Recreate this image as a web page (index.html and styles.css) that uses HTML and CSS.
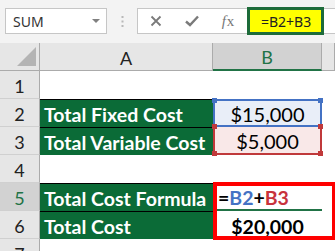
FILE: index.html
```html
<!DOCTYPE html>
<html lang="en">
<head>
    <meta charset="UTF-8">
    <title>Total Cost Formula</title>
    <link rel="stylesheet" href="styles.css">
</head>
<body>

<div class="toolbar">
    <div class="namebox"><span>SUM</span><span class="caret"></span></div>
    <div class="grip">
        <svg width="3" height="11" viewBox="0 0 3 11"><rect x="0.5" y="0" width="2" height="2" fill="#b8b8b8"/><rect x="0.5" y="4.5" width="2" height="2" fill="#b8b8b8"/><rect x="0.5" y="9" width="2" height="2" fill="#b8b8b8"/></svg>
    </div>
    <div class="fbar">
        <span class="icon">
            <svg width="12" height="12" viewBox="0 0 12 12"><path d="M1.5 1.5 L10.5 10.5 M10.5 1.5 L1.5 10.5" stroke="#7a7a7a" stroke-width="1.8" fill="none"/></svg>
        </span>
        <span class="icon">
            <svg width="14" height="12" viewBox="0 0 14 12"><path d="M1 6.5 L5 10 L13 1.5" stroke="#7a7a7a" stroke-width="2.4" fill="none"/></svg>
        </span>
        <span class="icon fx"><i>f</i><span>x</span></span>
        <div class="formula">=B2+B3</div>
    </div>
</div>

<div class="sheet">
    <div class="corner"><span class="tri"></span></div>
    <div class="colhead">A</div>
    <div class="colhead sel">B</div>
    <div class="colhead"></div>

    <div class="rowhead">1</div>
    <div class="cell"></div><div class="cell"></div><div class="cell"></div>

    <div class="rowhead">2</div>
    <div class="cell label">Total Fixed Cost</div>
    <div class="cell value ref blue">$15,000
        <span class="h tl"></span><span class="h tr"></span>
    </div>
    <div class="cell"></div>

    <div class="rowhead">3</div>
    <div class="cell label">Total Variable Cost</div>
    <div class="cell value ref red">$5,000
        <span class="h tl"></span><span class="h tr"></span><span class="h bl"></span><span class="h br"></span>
    </div>
    <div class="cell"></div>

    <div class="rowhead">4</div>
    <div class="cell"></div><div class="cell"></div><div class="cell"></div>

    <div class="rowhead sel">5</div>
    <div class="cell label">Total Cost Formula</div>
    <div class="cell formula-cell">=<span class="b2">B2</span>+<span class="b3">B3</span></div>
    <div class="cell"></div>

    <div class="rowhead">6</div>
    <div class="cell label">Total Cost</div>
    <div class="cell value total">$20,000</div>
    <div class="cell"></div>

    <div class="rowhead">7</div>
    <div class="cell"></div><div class="cell"></div><div class="cell"></div>

    <div class="highlight"></div>
</div>

</body>
</html>
```

FILE: styles.css
```css
body {
    margin: 0;
    font-family: Lato, "Liberation Sans", sans-serif;
    background-color: #fff;
    overflow: hidden;
}
.toolbar {
    height: 43px;
    box-sizing: border-box;
    padding-top: 8px;
    display: flex;
    align-items: flex-start;
    background-color: #f3f3f3;
}
.namebox {
    margin-left: 5px;
    width: 102px;
    height: 26px;
    box-sizing: border-box;
    padding: 0 6px 0 7px;
    display: flex;
    align-items: center;
    justify-content: space-between;
    background-color: #fff;
    border: 1px solid #c6c6c6;
    font-family: "Noto Sans", sans-serif;
    font-size: 14px;
    color: #333;
}
.caret {
    border-left: 4px solid transparent;
    border-right: 4px solid transparent;
    border-top: 4px solid #808080;
}
.grip {
    width: 30px;
    height: 26px;
    display: flex;
    align-items: center;
    justify-content: center;
}
.fbar {
    flex: 1;
    height: 26px;
    box-sizing: border-box;
    display: flex;
    align-items: center;
    background-color: #fff;
    border: 1px solid #c6c6c6;
    border-right: none;
}
.icon {
    width: 36px;
    display: flex;
    align-items: center;
    justify-content: center;
}
.fx {
    font-family: "Liberation Serif", serif;
    font-size: 15px;
    color: #777;
}
.fx i {
    margin-right: 1px;
}
.formula {
    margin-left: 1px;
    width: 77px;
    height: 28px;
    box-sizing: border-box;
    padding-left: 11px;
    display: flex;
    align-items: center;
    background-color: #ffff00;
    border: 3px solid #1d6b3a;
    font-family: "Noto Sans", sans-serif;
    font-size: 14px;
    color: #222;
}
.sheet {
    position: relative;
    display: grid;
    grid-template-columns: 40px 173px 109px 1fr;
    grid-auto-rows: 28px;
}
.corner, .colhead, .rowhead {
    box-sizing: border-box;
    background-color: #e6e6e6;
    display: flex;
    align-items: center;
    justify-content: center;
    color: #222;
}
.corner {
    border-right: 1px solid #ababab;
    border-bottom: 1px solid #ababab;
    justify-content: flex-end;
    align-items: flex-end;
    padding: 0 3px 4px 0;
}
.tri {
    width: 0;
    height: 0;
    border-left: 19px solid transparent;
    border-bottom: 19px solid #b4b4b4;
}
.colhead {
    border-right: 1px solid #ababab;
    border-bottom: 1px solid #ababab;
    font-size: 18px;
    padding-top: 2px;
}
.colhead.sel {
    background-color: #d2d2d2;
    color: #217346;
    border-bottom: 2px solid #217346;
}
.rowhead {
    border-right: 1px solid #ababab;
    border-bottom: 1px solid #d0d0d0;
    font-size: 18px;
    padding-top: 2px;
}
.rowhead.sel {
    background-color: #d2d2d2;
    color: #217346;
}
.cell {
    position: relative;
    box-sizing: border-box;
    display: flex;
    align-items: center;
    font-size: 20px;
    color: #000;
}
.label {
    padding: 2px 0 0 4px;
    background-color: #0b6b37;
    border-top: 1px solid #000;
    color: #fff;
    font-size: 19.5px;
    font-weight: bold;
}
.value {
    justify-content: center;
    padding-top: 2px;
}
.ref {
    border: 2px solid;
}
.ref.blue {
    background-color: #e9eef8;
    border-color: #4472c4;
}
.ref.red {
    background-color: #f9e8e8;
    border-color: #c0393b;
    border-top: none;
}
.h {
    position: absolute;
    width: 5px;
    height: 5px;
}
.blue .h { background-color: #4472c4; }
.red .h { background-color: #c0393b; }
.h.tl { top: -3px; left: -3px; }
.h.tr { top: -3px; right: -3px; }
.h.bl { bottom: -3px; left: -3px; }
.h.br { bottom: -3px; right: -3px; }
.formula-cell {
    padding: 2px 0 0 5px;
    font-size: 19.5px;
    font-weight: bold;
    border-bottom: 2px solid #217346;
}
.b2 { color: #4472c4; }
.b3 { color: #c8323c; }
.total {
    font-size: 19.5px;
    font-weight: bold;
}
.highlight {
    position: absolute;
    grid-column: 3;
    grid-row: 6 / span 2;
    top: -1px;
    left: 0;
    right: -1px;
    bottom: -1px;
    border: 4px solid #ff0000;
}
```
